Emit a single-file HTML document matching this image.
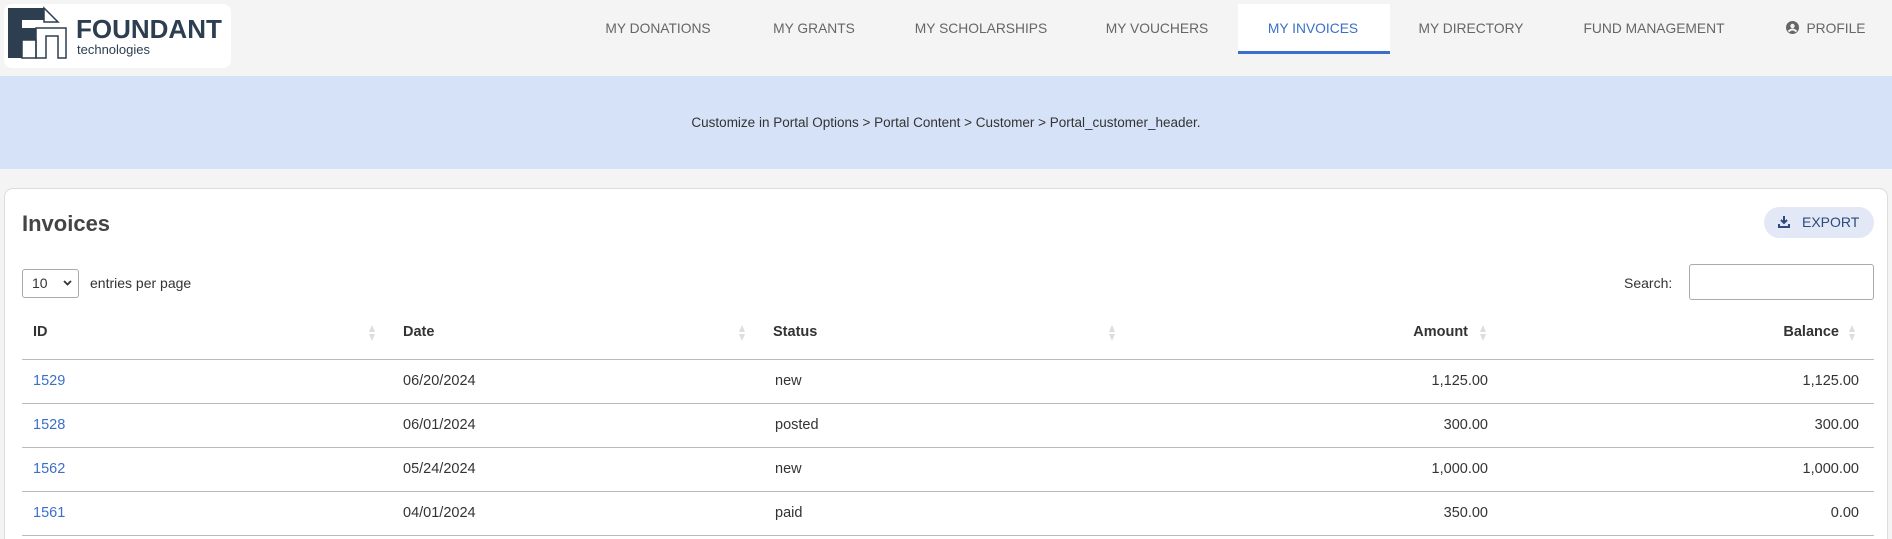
<!DOCTYPE html>
<html><head><meta charset="utf-8"><style>
*{box-sizing:border-box;margin:0;padding:0}
html,body{width:1892px;height:539px;overflow:hidden}
body{background:#f4f4f4;font-family:"Liberation Sans",Arial,sans-serif;color:#333;position:relative}
.abs{position:absolute}
.nav{font-size:13.8px;color:#666;top:21px;white-space:nowrap;transform:translateX(-50%)}
.banner{top:76px;left:0;width:1892px;height:93px;background:#d6e2f8;text-align:center;font-size:13.5px;color:#333;line-height:93px}
.card{top:188px;left:4px;width:1884px;height:360px;background:#fff;border:1px solid #ddd;border-radius:9px}
.th{top:324px;font-size:14.5px;font-weight:bold;color:#333}
.td{font-size:14.5px;color:#333}
.line{left:22px;width:1852px;height:1px;background:#bbb}
.sort{width:8px;height:18px}
a{color:#3b6fc9;text-decoration:none}
</style></head><body>
<div class="abs" style="left:4px;top:4px;width:227px;height:64px;background:#fff;border-radius:8px"></div>
<svg class="abs" style="left:8px;top:6px" width="66" height="58" viewBox="0 0 66 58">
<path d="M0 2H36V14H14V22H28V34H14V52H0Z" fill="#2c3e50"/>
<path d="M36 2L50 16H36Z" fill="none" stroke="#2c3e50" stroke-width="1.5"/>
<path d="M28 22H58V52H50V30H38V52H28Z" fill="none" stroke="#2c3e50" stroke-width="1.5"/>
<path d="M14 34H28V52H14Z" fill="none" stroke="#2c3e50" stroke-width="1.5"/>
</svg>
<div class="abs" style="left:76px;top:14px;font-size:26px;font-weight:bold;color:#2c3e50">FOUNDANT</div>
<div class="abs" style="left:77px;top:42px;font-size:13px;color:#2c3e50">technologies</div>
<div class="abs" style="left:1238px;top:4px;width:152px;height:50px;background:#fff;border-bottom:3px solid #3b6fc9"></div>
<div class="abs nav" style="left:658px">MY DONATIONS</div>
<div class="abs nav" style="left:814px">MY GRANTS</div>
<div class="abs nav" style="left:981px">MY SCHOLARSHIPS</div>
<div class="abs nav" style="left:1157px">MY VOUCHERS</div>
<div class="abs nav" style="left:1313px;color:#3b6fc9">MY INVOICES</div>
<div class="abs nav" style="left:1471px">MY DIRECTORY</div>
<div class="abs nav" style="left:1654px">FUND MANAGEMENT</div>
<svg class="abs" style="left:1786px;top:21px" width="13" height="13" viewBox="0 0 13 13"><circle cx="6.5" cy="6.5" r="6.5" fill="#666"/><circle cx="6.5" cy="5" r="2.2" fill="#f4f4f4"/><path d="M2.5 10.5Q6.5 6.5 10.5 10.5" stroke="#f4f4f4" stroke-width="2" fill="none"/></svg>
<div class="abs nav" style="left:1836px">PROFILE</div>
<div class="abs banner">Customize in Portal Options &gt; Portal Content &gt; Customer &gt; Portal_customer_header.</div>
<div class="abs card"></div>
<div class="abs" style="left:22px;top:211px;font-size:22px;font-weight:bold;color:#444">Invoices</div>
<div class="abs" style="left:1764px;top:207px;width:110px;height:31px;background:#e2e8f6;border-radius:16px;font-size:14px;color:#2c4a7c;line-height:31px;padding-left:38px">EXPORT</div>
<svg class="abs" style="left:1777px;top:215px" width="14" height="14" viewBox="0 0 14 14"><path d="M7 1V8M4 5L7 8L10 5" stroke="#2c4a7c" stroke-width="2" fill="none"/><path d="M1 9V13H13V9H11V11H3V9Z" fill="#2c4a7c"/></svg>
<div class="abs" style="left:22px;top:269px;width:57px;height:29px;border:1px solid #aaa;border-radius:3px;font-size:14px;line-height:27px;padding-left:9px">10</div>
<svg class="abs" style="left:63px;top:280px" width="9" height="6" viewBox="0 0 9 6"><path d="M1 1L4.5 4.5L8 1" stroke="#333" stroke-width="1.8" fill="none"/></svg>
<div class="abs" style="left:90px;top:275px;font-size:14px">entries per page</div>
<div class="abs" style="left:1624px;top:275px;font-size:14px">Search:</div>
<div class="abs" style="left:1689px;top:264px;width:185px;height:36px;border:1px solid #aaa;border-radius:3px"></div>
<div class="abs th" style="left:33px">ID</div>
<div class="abs th" style="left:403px">Date</div>
<div class="abs th" style="left:773px">Status</div>
<div class="abs th" style="right:424px">Amount</div>
<div class="abs th" style="right:53px">Balance</div>
<svg class="abs sort" style="left:368px;top:324px" viewBox="0 0 8 18"><path d="M4 1L7 8H1Z M4 17L7 10H1Z" fill="#ddd"/></svg>
<svg class="abs sort" style="left:738px;top:324px" viewBox="0 0 8 18"><path d="M4 1L7 8H1Z M4 17L7 10H1Z" fill="#ddd"/></svg>
<svg class="abs sort" style="left:1108px;top:324px" viewBox="0 0 8 18"><path d="M4 1L7 8H1Z M4 17L7 10H1Z" fill="#ddd"/></svg>
<svg class="abs sort" style="left:1479px;top:324px" viewBox="0 0 8 18"><path d="M4 1L7 8H1Z M4 17L7 10H1Z" fill="#ddd"/></svg>
<svg class="abs sort" style="left:1848px;top:324px" viewBox="0 0 8 18"><path d="M4 1L7 8H1Z M4 17L7 10H1Z" fill="#ddd"/></svg>
<div class="abs line" style="top:359px"></div>
<div class="abs line" style="top:403px"></div>
<div class="abs line" style="top:447px"></div>
<div class="abs line" style="top:491px"></div>
<div class="abs line" style="top:535px"></div>

<div class="abs td" style="left:33px;top:373px"><a>1529</a></div>
<div class="abs td" style="left:403px;top:373px">06/20/2024</div>
<div class="abs td" style="left:775px;top:373px">new</div>
<div class="abs td" style="right:404px;top:373px">1,125.00</div>
<div class="abs td" style="right:33px;top:373px">1,125.00</div>

<div class="abs td" style="left:33px;top:417px"><a>1528</a></div>
<div class="abs td" style="left:403px;top:417px">06/01/2024</div>
<div class="abs td" style="left:775px;top:417px">posted</div>
<div class="abs td" style="right:404px;top:417px">300.00</div>
<div class="abs td" style="right:33px;top:417px">300.00</div>

<div class="abs td" style="left:33px;top:461px"><a>1562</a></div>
<div class="abs td" style="left:403px;top:461px">05/24/2024</div>
<div class="abs td" style="left:775px;top:461px">new</div>
<div class="abs td" style="right:404px;top:461px">1,000.00</div>
<div class="abs td" style="right:33px;top:461px">1,000.00</div>

<div class="abs td" style="left:33px;top:505px"><a>1561</a></div>
<div class="abs td" style="left:403px;top:505px">04/01/2024</div>
<div class="abs td" style="left:775px;top:505px">paid</div>
<div class="abs td" style="right:404px;top:505px">350.00</div>
<div class="abs td" style="right:33px;top:505px">0.00</div>
</body></html>
